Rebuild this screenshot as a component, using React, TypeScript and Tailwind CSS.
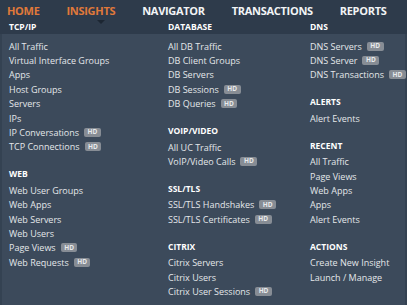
import { Fragment } from 'react';

type Item = { label: string; hd?: boolean };
type Section = { title: string; items: Item[] };

const col1: Section[] = [
  {
    title: 'TCP/IP',
    items: [
      { label: 'All Traffic' },
      { label: 'Virtual Interface Groups' },
      { label: 'Apps' },
      { label: 'Host Groups' },
      { label: 'Servers' },
      { label: 'IPs' },
      { label: 'IP Conversations', hd: true },
      { label: 'TCP Connections', hd: true },
    ],
  },
  {
    title: 'WEB',
    items: [
      { label: 'Web User Groups' },
      { label: 'Web Apps' },
      { label: 'Web Servers' },
      { label: 'Web Users' },
      { label: 'Page Views', hd: true },
      { label: 'Web Requests', hd: true },
    ],
  },
];

const col2: Section[] = [
  {
    title: 'DATABASE',
    items: [
      { label: 'All DB Traffic' },
      { label: 'DB Client Groups' },
      { label: 'DB Servers' },
      { label: 'DB Sessions', hd: true },
      { label: 'DB Queries', hd: true },
    ],
  },
  {
    title: 'VOIP/VIDEO',
    items: [{ label: 'All UC Traffic' }, { label: 'VoIP/Video Calls', hd: true }],
  },
  {
    title: 'SSL/TLS',
    items: [
      { label: 'SSL/TLS Handshakes', hd: true },
      { label: 'SSL/TLS Certificates', hd: true },
    ],
  },
  {
    title: 'CITRIX',
    items: [
      { label: 'Citrix Servers' },
      { label: 'Citrix Users' },
      { label: 'Citrix User Sessions', hd: true },
    ],
  },
];

const col3: Section[] = [
  {
    title: 'DNS',
    items: [
      { label: 'DNS Servers', hd: true },
      { label: 'DNS Server', hd: true },
      { label: 'DNS Transactions', hd: true },
    ],
  },
  { title: 'ALERTS', items: [{ label: 'Alert Events' }] },
  {
    title: 'RECENT',
    items: [
      { label: 'All Traffic' },
      { label: 'Page Views' },
      { label: 'Web Apps' },
      { label: 'Apps' },
      { label: 'Alert Events' },
    ],
  },
  {
    title: 'ACTIONS',
    items: [{ label: 'Create New Insight' }, { label: 'Launch / Manage' }],
  },
];

const Hd = () => (
  <span className="ml-[5px] inline-flex h-[9px] shrink-0 items-center rounded-[2px] bg-[#878d95] px-[3.5px] text-[6.5px] font-bold leading-none text-[#e8eaec]">
    HD
  </span>
);

// bloques de una columna (el primer título va en la franja oscura)
const Column = ({ sections }: { sections: Section[] }) => (
  <div className="flex min-w-0 flex-col">
    {sections.map((s, i) => (
      <Fragment key={s.title}>
        {i > 0 && (
          <div className="mt-[13px] mb-[2px] h-[14px] text-[8.5px] font-bold leading-[14px] text-white">
            {s.title}
          </div>
        )}
        {s.items.map((it) => (
          <div
            key={it.label}
            className="flex h-[14.4px] items-center whitespace-nowrap text-[9px] leading-none text-[#e4e7ea]"
          >
            {it.label}
            {it.hd && <Hd />}
          </div>
        ))}
      </Fragment>
    ))}
  </div>
);

const App = () => {
  const nav = [
    { label: 'HOME', active: true },
    { label: 'INSIGHTS', active: true, caret: true },
    { label: 'NAVIGATOR' },
    { label: 'TRANSACTIONS' },
    { label: 'REPORTS' },
  ];

  return (
    <div
      className="flex h-[305px] w-[407px] flex-col overflow-hidden bg-[#3c4a5b]"
      style={{ fontFamily: '"Open Sans", "Liberation Sans", sans-serif' }}
    >
      {/* barra de navegación */}
      <div className="bg-[#2e3b4b]">
        <div className="flex h-[20px] items-center pl-[7px]">
          {nav.map((n) => (
            <div
              key={n.label}
              className={`relative mr-[27px] text-[11px] font-bold leading-none tracking-[-0.3px] ${
                n.active ? 'text-[#e0793a]' : 'text-[#f2f4f6]'
              }`}
            >
              {n.label}
              {n.caret && (
                <span className="absolute top-[15px] right-[10px] h-0 w-0 border-x-[4px] border-t-[4px] border-x-transparent border-t-[#1c2632]" />
              )}
            </div>
          ))}
        </div>
        <div className="grid h-[14px] grid-cols-[159px_142px_1fr] items-center pl-[9px] text-[8.5px] font-bold leading-none text-white">
          <div>TCP/IP</div>
          <div>DATABASE</div>
          <div>DNS</div>
        </div>
      </div>

      {/* contenido del menú */}
      <div className="grid flex-1 grid-cols-[159px_142px_1fr] border-x-2 border-[#344252] pt-[5px] pl-[7px]">
        <Column sections={col1} />
        <Column sections={col2} />
        <Column sections={col3} />
      </div>
    </div>
  );
};

export default App;
